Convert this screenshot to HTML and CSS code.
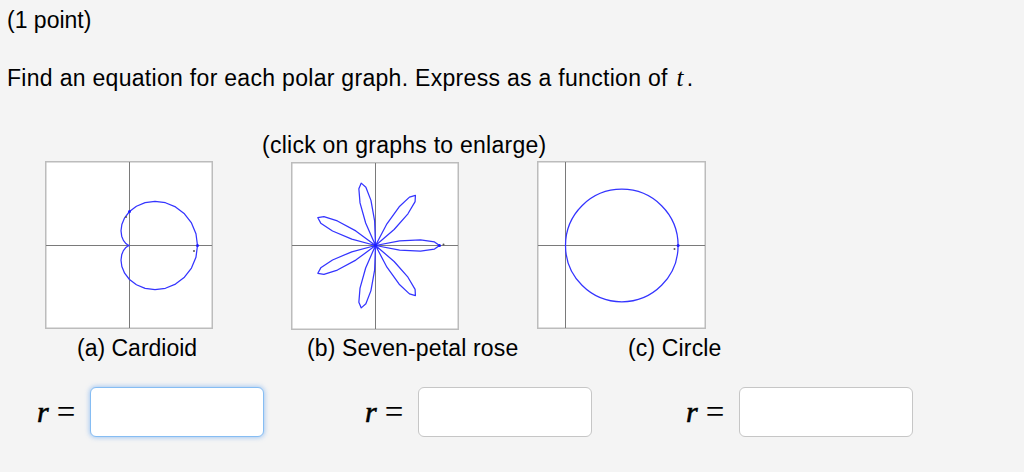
FILE: index.html
```html
<!DOCTYPE html>
<html>
<head>
<meta charset="utf-8">
<link rel="stylesheet" href="styles.css">
</head>
<body>
<div class="page">
  <p class="points">(1 point)</p>
  <p class="prompt">Find an equation for each polar graph. Express as a function of <i class="mv">t</i>.</p>
  <p class="hint">(click on graphs to enlarge)</p>

  <div class="graphs">
    <figure class="fig">
      <svg class="plot" width="168" height="168" viewBox="0 0 168 168">
        <rect x="0.75" y="0.75" width="166.5" height="166.5" fill="#fff" stroke="#bcbcbc" stroke-width="1.5"/>
        <line x1="84.5" y1="1" x2="84.5" y2="167" stroke="#7a7a7a"/>
        <line x1="1" y1="84.5" x2="167" y2="84.5" stroke="#7a7a7a"/>
        <g transform="translate(84.5 84.5)">
          <path fill="none" stroke="#3434ff" stroke-width="1.25" stroke-linejoin="round" d="M68,0 L66.46,-11.72 61.97,-22.56 54.94,-31.72 46,-38.6 35.9,-42.78 25.5,-44.17 15.61,-42.88 6.93,-39.29 0,-34 -4.88,-27.67 -7.65,-21.02 -8.5,-14.72 -7.81,-9.3 -6.1,-5.12 -3.95,-2.28 -1.93,-0.7 -0.51,-0.09 0,0 -0.51,0.09 -1.93,0.7 -3.95,2.28 -6.1,5.12 -7.81,9.3 -8.5,14.72 -7.65,21.02 -4.88,27.67 0,34 6.93,39.29 15.61,42.88 25.5,44.17 35.9,42.78 46,38.6 54.94,31.72 61.97,22.56 66.46,11.72 Z"/>
          <circle cx="68" cy="0" r="1.5" fill="#1c1cff"/>
          <circle cx="0" cy="-34" r="1.5" fill="#1c1cff"/>
          <circle cx="-3.5" cy="-28.5" r="1" fill="#555"/>
          <circle cx="64.5" cy="5.5" r="1" fill="#555"/>
        </g>
      </svg>
      <figcaption class="cap cap-a">(a) Cardioid</figcaption>
    </figure>

    <figure class="fig">
      <svg class="plot" width="168" height="168" viewBox="0 0 168 168">
        <defs>
          <path id="petal" fill="none" stroke="#3434ff" stroke-width="1.25" stroke-linejoin="round" d="M0,0 L24.1,4.6 L45,5.6 L59,3.6 L64,0 L59,-3.6 L45,-5.6 L24.1,-4.6 Z"/>
        </defs>
        <rect x="0.75" y="0.75" width="166.5" height="166.5" fill="#fff" stroke="#bcbcbc" stroke-width="1.5"/>
        <line x1="84.5" y1="1" x2="84.5" y2="167" stroke="#7a7a7a"/>
        <line x1="1" y1="83.5" x2="167" y2="83.5" stroke="#7a7a7a"/>
        <g transform="translate(84.5 83.5)">
          <use href="#petal"/>
          <use href="#petal" transform="rotate(51.43)"/>
          <use href="#petal" transform="rotate(102.86)"/>
          <use href="#petal" transform="rotate(154.29)"/>
          <use href="#petal" transform="rotate(205.71)"/>
          <use href="#petal" transform="rotate(257.14)"/>
          <use href="#petal" transform="rotate(308.57)"/>
          <circle cx="64" cy="0" r="1.5" fill="#1c1cff"/>
          <circle cx="0" cy="0" r="1.7" fill="#1c1cff"/>
          <circle cx="68" cy="-1" r="1" fill="#555"/>
        </g>
      </svg>
      <figcaption class="cap cap-b">(b) Seven-petal rose</figcaption>
    </figure>

    <figure class="fig">
      <svg class="plot" width="169" height="168" viewBox="0 0 169 168">
        <rect x="0.75" y="0.75" width="167.5" height="166.5" fill="#fff" stroke="#bcbcbc" stroke-width="1.5"/>
        <line x1="28.5" y1="1" x2="28.5" y2="167" stroke="#7a7a7a"/>
        <line x1="1" y1="84.5" x2="168" y2="84.5" stroke="#7a7a7a"/>
        <circle cx="84.8" cy="84.5" r="56.3" fill="none" stroke="#3434ff" stroke-width="1.25"/>
        <circle cx="141.1" cy="84.5" r="1.5" fill="#1c1cff"/>
        <circle cx="137.5" cy="88" r="1" fill="#555"/>
      </svg>
      <figcaption class="cap cap-c">(c) Circle</figcaption>
    </figure>
  </div>

  <div class="answers">
    <div class="ans">
      <span class="eq"><i class="mv">r</i><span class="eqs">=</span></span>
      <input class="box focus" type="text">
    </div>
    <div class="ans">
      <span class="eq"><i class="mv">r</i><span class="eqs">=</span></span>
      <input class="box" type="text">
    </div>
    <div class="ans">
      <span class="eq"><i class="mv">r</i><span class="eqs">=</span></span>
      <input class="box" type="text">
    </div>
  </div>
</div>
</body>
</html>
```

FILE: styles.css
```css
html, body {
  margin: 0;
  padding: 0;
  background: #f4f4f4;
}

.page {
  width: 1024px;
  height: 472px;
  overflow: hidden;
  font-family: "Liberation Sans", Arial, Helvetica, sans-serif;
  font-size: 23px;
  letter-spacing: 0.3px;
  line-height: 26px;
  color: #000;
  padding-top: 7px;
  box-sizing: border-box;
}

.points {
  margin: 0 0 0 7px;
  letter-spacing: 0;
}

.prompt {
  margin: 32px 0 0 7px;
}

.mv {
  font-family: "Liberation Serif", "Times New Roman", serif;
  font-style: italic;
}

.prompt .mv {
  font-size: 25px;
  margin: 0 3px 0 2px;
}

.hint {
  margin: 41px 0 0 262px;
  letter-spacing: 0.25px;
}

.graphs {
  display: grid;
  grid-template-columns: 246px 246px 246px;
  margin-top: 3px;
  padding-left: 45px;
}

.fig {
  margin: 0;
}

.plot {
  display: block;
}

.cap {
  margin-top: 6px;
  white-space: nowrap;
  letter-spacing: 0.15px;
}

.cap-a { margin-left: 32px; letter-spacing: 0; }
.cap-b { margin-left: 16px; }
.cap-c { margin-left: 91px; }

.graphs .fig:nth-child(2) .plot { margin-top: 1px; }
.graphs .fig:nth-child(2) .cap { margin-top: 5px; }

.answers {
  display: grid;
  grid-template-columns: 328px 321px auto;
  padding-left: 37px;
  margin-top: 26px;
}

.ans {
  display: flex;
  align-items: center;
}

.eq {
  width: 53px;
  display: flex;
  align-items: center;
  font-family: "Liberation Serif", "Times New Roman", serif;
  font-size: 33px;
  line-height: 50px;
  letter-spacing: 0;
}

.eq .mv {
  font-size: 30px;
  -webkit-text-stroke: 0.6px #000;
}

.eqs {
  margin-left: 8px;
}

.box {
  width: 174px;
  height: 50px;
  box-sizing: border-box;
  border: 1px solid #c6c6c6;
  border-radius: 6px;
  background: #fff;
  margin: 0;
  padding: 0 8px;
  outline: none;
}

.box.focus {
  border-color: #86bdf3;
  box-shadow: 0 0 4px 1px rgba(110, 170, 240, 0.55);
}
```
